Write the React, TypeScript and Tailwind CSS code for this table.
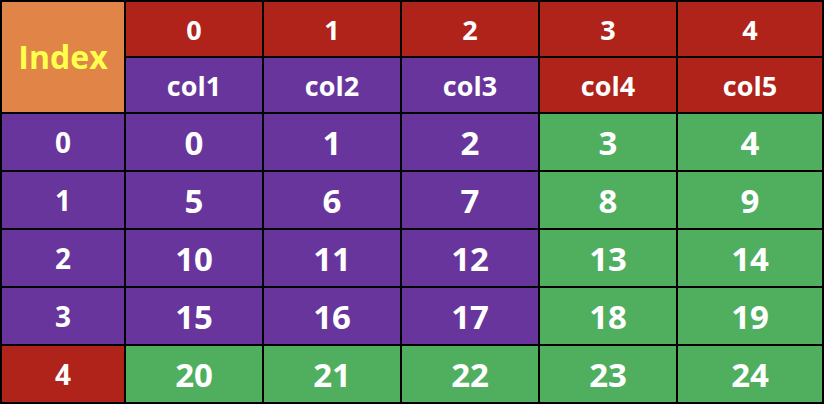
import React from "react";

const RED = "bg-[#b0231a]";
const PURPLE = "bg-[#67359b]";
const GREEN = "bg-[#50ae5f]";

function Cell({ bg, size, children }: { bg: string; size: string; children: React.ReactNode }) {
  return (
    <div className={`${bg} ${size} flex items-center justify-center text-white font-bold leading-none`}>
      {children}
    </div>
  );
}

export default function App() {
  const rows = [0, 1, 2, 3, 4];
  const cols = [0, 1, 2, 3, 4];
  return (
    <div
      className="w-[824px] h-[404px] bg-black p-[2px] grid gap-[2px] grid-cols-[122px_136px_136px_136px_136px_144px] grid-rows-[54px_54px_56px_56px_56px_56px_56px]"
      style={{ fontFamily: '"Open Sans", "Liberation Sans", sans-serif' }}
    >
      <div className="row-span-2 bg-[#e08448] flex items-center justify-center text-[#ffff4d] font-bold text-[32px] leading-none">
        Index
      </div>
      {cols.map((c) => (
        <Cell key={"h" + c} bg={RED} size="text-[27px]">
          {c}
        </Cell>
      ))}
      {cols.map((c) => (
        <Cell key={"n" + c} bg={c >= 3 ? RED : PURPLE} size="text-[27px]">
          {"col" + (c + 1)}
        </Cell>
      ))}
      {rows.map((r) => (
        <React.Fragment key={r}>
          <Cell bg={r === 4 ? RED : PURPLE} size="text-[28px]">
            {r}
          </Cell>
          {cols.map((c) => (
            <Cell key={c} size="text-[33px]" bg={r === 4 || c >= 3 ? GREEN : PURPLE}>
              {r * 5 + c}
            </Cell>
          ))}
        </React.Fragment>
      ))}
    </div>
  );
}
